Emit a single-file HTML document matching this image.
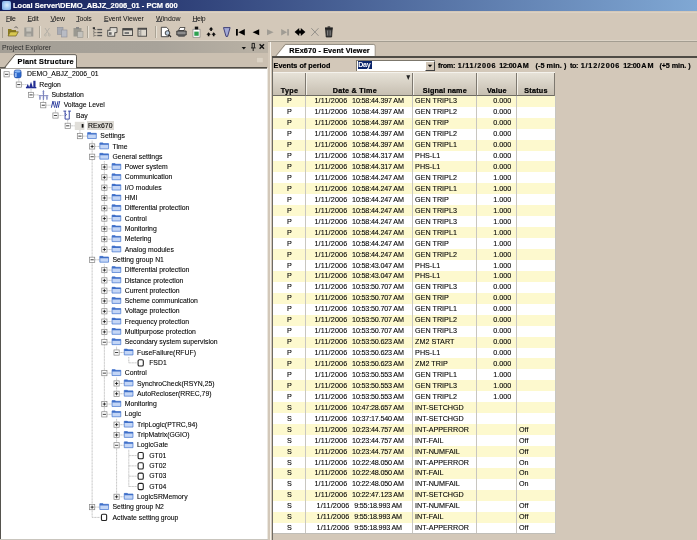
<!DOCTYPE html>
<html><head><meta charset="utf-8"><title>PCM 600</title><style>
*{margin:0;padding:0;box-sizing:border-box}
html,body{width:697px;height:540px;overflow:hidden;background:#d3c8b9}
body{position:relative;font-family:"Liberation Sans",sans-serif;color:#000}
.a{position:absolute;white-space:pre}
.t{position:absolute;white-space:pre;font-size:6.85px;line-height:10px;height:10px;color:#000;-webkit-text-stroke:.08px #000}
.c{position:absolute;white-space:pre;font-size:7.2px;line-height:11px;height:11px;color:#000;-webkit-text-stroke:.1px #000}
.b{font-weight:bold;-webkit-text-stroke:.18px currentColor}
svg{position:absolute;overflow:visible}
.u{text-decoration:underline;text-decoration-thickness:.6px;text-underline-offset:.2px;text-decoration-color:#555}
#r{position:absolute;left:0;top:0;width:697px;height:540px;will-change:transform;transform:translateZ(0);filter:blur(.5px)}
</style></head><body><div id="r">
<div class="a" style="left:-8px;top:-8px;width:713px;height:19.3px;background:linear-gradient(90deg,#121c58 0%,#121c58 8px,#80a8d4 705px,#80a8d4 100%)"></div>
<div class="a" style="left:1.8px;top:.7px;width:9.4px;height:9.3px;background:radial-gradient(circle at 55% 45%,#dcecfc 0%,#a8ccf4 45%,#6c9ee0 100%);border-radius:1.6px"></div>
<div class="a b" style="left:13px;top:0px;font-size:7.5px;line-height:11px;color:#fff">Local Server\DEMO_ABJZ_2006_01 - PCM 600</div>
<div class="a" style="left:-8px;top:12px;width:713px;height:1px;background:#dbd1c3"></div>
<div class="a" style="left:6px;top:13px;font-size:6.9px;letter-spacing:-0.405px;line-height:11px;color:#111"><span class="u">F</span>ile</div>
<div class="a" style="left:27.4px;top:13px;font-size:6.9px;letter-spacing:-0.223px;line-height:11px;color:#111"><span class="u">E</span>dit</div>
<div class="a" style="left:50.4px;top:13px;font-size:6.9px;letter-spacing:-0.108px;line-height:11px;color:#111"><span class="u">V</span>iew</div>
<div class="a" style="left:76.2px;top:13px;font-size:6.9px;letter-spacing:-0.122px;line-height:11px;color:#111"><span class="u">T</span>ools</div>
<div class="a" style="left:103.9px;top:13px;font-size:6.9px;letter-spacing:-0.061px;line-height:11px;color:#111"><span class="u">E</span>vent Viewer</div>
<div class="a" style="left:156px;top:13px;font-size:6.9px;letter-spacing:0.010px;line-height:11px;color:#111"><span class="u">W</span>indow</div>
<div class="a" style="left:192.4px;top:13px;font-size:6.9px;letter-spacing:-0.298px;line-height:11px;color:#111"><span class="u">H</span>elp</div>
<div class="a" style="left:1.6px;top:26.7px;width:1px;height:11.2px;background:#a89f90"></div>
<div class="a" style="left:39px;top:26px;width:1px;height:12px;background:#aaa395"></div>
<div class="a" style="left:40px;top:26px;width:1px;height:12px;background:#e6e0d4"></div>
<div class="a" style="left:87.3px;top:26px;width:1px;height:12px;background:#aaa395"></div>
<div class="a" style="left:88.3px;top:26px;width:1px;height:12px;background:#e6e0d4"></div>
<div class="a" style="left:155px;top:26px;width:1px;height:12px;background:#aaa395"></div>
<div class="a" style="left:156px;top:26px;width:1px;height:12px;background:#e6e0d4"></div>
<svg style="left:0;top:24px" width="340" height="17" viewBox="0 0 340 17">
<path d="M8 5h3l1 1h4v2h-6l-2 4z" fill="#8a7a20"/><path d="M8 12l2.3-4.2h8l-2.3 4.2z" fill="#d8c850" stroke="#5a4c10" stroke-width=".6"/><path d="M14.5 3.5c1.5-1 2.8-.5 3.2.8" stroke="#333" stroke-width=".7" fill="none"/>
<rect x="24.3" y="3.5" width="9" height="9" fill="#9c9a94"/><rect x="26.3" y="3.5" width="5" height="4" fill="#c8c5bd"/><rect x="26.5" y="9.5" width="4.6" height="3" fill="#b8b5ad"/>
<path d="M45 4l4 6M49.5 4l-4 6" stroke="#b0ada5" stroke-width=".9"/><circle cx="45.3" cy="11" r="1" fill="none" stroke="#b0ada5" stroke-width=".7"/><circle cx="49.3" cy="11" r="1" fill="none" stroke="#b0ada5" stroke-width=".7"/>
<rect x="57.5" y="3.3" width="5.5" height="7" fill="#a8abb4" stroke="#8c8e98" stroke-width=".6"/><rect x="61.5" y="6" width="5.5" height="7" fill="#b8bbc4" stroke="#8c8e98" stroke-width=".6"/>
<rect x="73.5" y="4" width="8" height="8.5" fill="#9a9890"/><rect x="76" y="3" width="3" height="2" fill="#888"/><rect x="77.5" y="7.5" width="5.5" height="6" fill="#c4c2bc" stroke="#8c8a84" stroke-width=".5"/>
<path d="M93.8 4v8.4M93.8 5.6h3M93.8 8.6h3M93.8 11.6h3" stroke="#333" stroke-width=".7" stroke-dasharray=".9 .7" fill="none"/><rect x="92.8" y="3.2" width="2.2" height="1.8" fill="#333"/><rect x="97.3" y="4.9" width="4.8" height="1.3" fill="#555"/><rect x="97.3" y="7.9" width="4.8" height="1.3" fill="#555"/><rect x="97.3" y="10.9" width="4.8" height="1.3" fill="#555"/>
<rect x="107.8" y="6.2" width="7" height="6" fill="#e8e4dc" stroke="#333" stroke-width=".8"/><path d="M110 6.2v-2.6h7v5h-2" fill="#dedad2" stroke="#333" stroke-width=".8"/><path d="M109 8.2h2.6v2.6h-2.6z" fill="#666"/>
<rect x="122.8" y="4.6" width="9.6" height="7" fill="#dcd7cd" stroke="#333" stroke-width=".8"/><rect x="122.8" y="4.6" width="9.6" height="1.8" fill="#444"/><rect x="124.6" y="8" width="4.4" height="2" fill="#777"/>
<rect x="138" y="4.2" width="8.6" height="8" fill="#dcd7cd" stroke="#333" stroke-width=".8"/><rect x="138" y="4.2" width="8.6" height="1.5" fill="#444"/><path d="M140.8 5.6v6.4" stroke="#666" stroke-width=".6"/><path d="M138.8 7.4h1.4M138.8 9.2h1.4M138.8 11h1.4" stroke="#777" stroke-width=".5"/>
<path d="M161.3 3.3h5.2l2 2v7.4h-7.2z" fill="#fff" stroke="#222" stroke-width=".8"/><circle cx="167.5" cy="9" r="2.3" fill="#bcd" stroke="#222" stroke-width=".8"/><path d="M169 10.8l2 2.2" stroke="#222" stroke-width="1.2"/>
<path d="M178.5 6.5l1.5-3h5l-1 3z" fill="#fff" stroke="#222" stroke-width=".7"/><path d="M176.8 7h9.4v4h-9.4z" fill="#8c8c8c" stroke="#222" stroke-width=".8"/><path d="M177.5 11h8l-1 1.8h-6z" fill="#555"/>
<rect x="193" y="5.2" width="7" height="8" fill="#fff" stroke="#777" stroke-width=".6"/><rect x="194.8" y="2.6" width="3.4" height="2.8" fill="#111"/><rect x="194.3" y="7.6" width="4.4" height="4.2" fill="#2ca050"/>
<path d="M211.1 2.9l2.2 2.6h-1.4v1.5h-1.6v-1.5h-1.4zM208.6 8.2l2.2 2.6h-1.4v1.5h-1.6v-1.5h-1.4zM213.7 8.2l2.2 2.6h-1.4v1.5h-1.6v-1.5h-1.4z" fill="#0a0a0a"/>
<path d="M223.5 3.6h6.6l-2.5 8.8h-1.6z" fill="#a2a8d6" stroke="#34346e" stroke-width=".9"/>
<rect x="236" y="5" width="1.8" height="6.6" fill="#000"/><path d="M244.8 5v6.6l-6.4-3.3z" fill="#000"/>
<path d="M259.2 5.3v6l-6.6-3z" fill="#000"/>
<path d="M267 5.3v6l6.6-3z" fill="#a09c94"/>
<path d="M281.2 5.1v6.4l5.8-3.2z" fill="#a09c94"/><rect x="287.2" y="5.1" width="1.7" height="6.4" fill="#a09c94"/>
<path d="M294.6 8l4.6-4v2.6h1.6v-2.6l4.6 4-4.6 4v-2.6h-1.6v2.6z" fill="#000"/>
<path d="M311.3 4.2l7.2 7.6M318.5 4.2l-7.2 7.6" stroke="#8c8a84" stroke-width=".9"/>
<path d="M325.6 5h6.6l-.6 8h-5.4z" fill="#444" stroke="#111" stroke-width=".7"/><rect x="325" y="3.4" width="7.8" height="1.8" fill="#222"/><rect x="327.6" y="2.4" width="2.6" height="1.2" fill="#222"/><path d="M327.6 6.5v5M330.2 6.5v5" stroke="#aaa" stroke-width=".6"/>
</svg>
<div class="a" style="left:-8px;top:39.7px;width:713px;height:1px;background:#dcd3c6"></div>
<div class="a" style="left:267px;top:40.7px;width:438px;height:1px;background:#a39d91"></div>
<div class="a" style="left:-8px;top:41px;width:275.5px;height:11.5px;background:linear-gradient(90deg,#a39e95 0%,#a8a39a 60%,#bab2a5 100%)"></div>
<div class="a" style="left:1.9px;top:42.1px;font-size:6.9px;line-height:11px;color:#2c2c2c;letter-spacing:0.013px">Project Explorer</div>
<svg style="left:240px;top:41px" width="28" height="12" viewBox="0 0 28 12"><path d="M1.6 6h4.4l-2.2 2.4z" fill="#111"/><path d="M12.1 2.2v4.6M14.4 2.2v4.6M11 6.9h4.6M13.2 7v3M12.1 2.4h2.3" stroke="#111" stroke-width=".9" fill="none"/><path d="M19.6 3.2l4.4 4.6M24 3.2l-4.4 4.6" stroke="#111" stroke-width="1.3"/></svg>
<div class="a" style="left:-8px;top:52.5px;width:275.5px;height:15px;background:#cbc0b1"></div>
<div class="a" style="left:0;top:67px;width:267px;height:1px;background:#4e4b45"></div>
<div class="a" style="left:0;top:68px;width:267px;height:1px;background:#8e8a82"></div>
<svg style="left:0;top:52px" width="268" height="16" viewBox="0 0 268 16"><path d="M0 15.5h4.5L15 2.7h60q1.5 0 1.5 1.5v11.3" fill="none" stroke="#5e5b54" stroke-width="1"/><path d="M5.2 16.2L15.3 3.2h59.5q1.2 0 1.2 1.2v11.8z" fill="#fff"/><rect x="256.6" y="5.4" width="6.6" height="5.4" fill="#dbd2c4" stroke="#c8beae" stroke-width=".7"/></svg>
<div class="a b" style="left:17.6px;top:55.6px;font-size:7.3px;line-height:11px;color:#000;letter-spacing:.26px">Plant Structure</div>
<div class="a" style="left:-8px;top:69px;width:274.5px;height:470.5px;background:#fff;border-left:9px solid #55534e"></div>
<div class="a" style="left:266.5px;top:68px;width:1px;height:472px;background:#ebe8e1"></div>
<div class="a" style="left:0;top:539.3px;width:268px;height:1px;background:#c9c5bd"></div>
<svg style="left:0;top:0" width="268" height="540" viewBox="0 0 268 540"><g stroke="#b0b0b0" stroke-width=".8" stroke-dasharray="1 .5" fill="none"><path d="M6.60 74.30h8" /><path d="M18.82 78.80V84.60" /><path d="M18.82 84.60h8" /><path d="M31.04 89.10V94.91" /><path d="M31.04 94.91h8" /><path d="M43.26 99.41V105.22" /><path d="M43.26 105.22h8" /><path d="M55.48 109.72V115.52" /><path d="M55.48 115.52h8" /><path d="M67.70 120.02V125.82" /><path d="M67.70 125.82h8" /><path d="M79.92 130.32V136.13" /><path d="M79.92 136.13h8" /><path d="M92.14 140.63V517.41" /><path d="M92.14 146.44h8" /><path d="M92.14 156.74h8" /><path d="M104.36 161.24V249.49" /><path d="M104.36 167.05h8" /><path d="M104.36 177.35h8" /><path d="M104.36 187.65h8" /><path d="M104.36 197.96h8" /><path d="M104.36 208.26h8" /><path d="M104.36 218.57h8" /><path d="M104.36 228.88h8" /><path d="M104.36 239.18h8" /><path d="M104.36 249.49h8" /><path d="M92.14 259.79h8" /><path d="M104.36 264.29V414.37" /><path d="M104.36 270.09h8" /><path d="M104.36 280.40h8" /><path d="M104.36 290.70h8" /><path d="M104.36 301.01h8" /><path d="M104.36 311.31h8" /><path d="M104.36 321.62h8" /><path d="M104.36 331.93h8" /><path d="M104.36 342.23h8" /><path d="M116.58 346.73V352.54" /><path d="M116.58 352.54h8" /><path d="M128.80 357.04V362.84" /><path d="M128.80 362.84h8" /><path d="M104.36 373.14h8" /><path d="M116.58 377.64V393.75" /><path d="M116.58 383.45h8" /><path d="M116.58 393.75h8" /><path d="M104.36 404.06h8" /><path d="M104.36 414.37h8" /><path d="M116.58 418.87V496.81" /><path d="M116.58 424.67h8" /><path d="M116.58 434.98h8" /><path d="M116.58 445.28h8" /><path d="M128.80 449.78V486.50" /><path d="M128.80 455.58h8" /><path d="M128.80 465.89h8" /><path d="M128.80 476.19h8" /><path d="M128.80 486.50h8" /><path d="M116.58 496.81h8" /><path d="M92.14 507.11h8" /><path d="M92.14 517.41h8" /></g>
<rect x="4.00" y="71.70" width="5.2" height="5.2" fill="#fff" stroke="#848484" stroke-width=".7"/>
<path d="M5.00 74.30h3.2" stroke="#000" stroke-width=".75"/>
<rect x="16.22" y="82.00" width="5.2" height="5.2" fill="#fff" stroke="#848484" stroke-width=".7"/>
<path d="M17.22 84.60h3.2" stroke="#000" stroke-width=".75"/>
<rect x="28.44" y="92.31" width="5.2" height="5.2" fill="#fff" stroke="#848484" stroke-width=".7"/>
<path d="M29.44 94.91h3.2" stroke="#000" stroke-width=".75"/>
<rect x="40.66" y="102.62" width="5.2" height="5.2" fill="#fff" stroke="#848484" stroke-width=".7"/>
<path d="M41.66 105.22h3.2" stroke="#000" stroke-width=".75"/>
<rect x="52.88" y="112.92" width="5.2" height="5.2" fill="#fff" stroke="#848484" stroke-width=".7"/>
<path d="M53.88 115.52h3.2" stroke="#000" stroke-width=".75"/>
<rect x="65.10" y="123.22" width="5.2" height="5.2" fill="#fff" stroke="#848484" stroke-width=".7"/>
<path d="M66.10 125.82h3.2" stroke="#000" stroke-width=".75"/>
<rect x="77.32" y="133.53" width="5.2" height="5.2" fill="#fff" stroke="#848484" stroke-width=".7"/>
<path d="M78.32 136.13h3.2" stroke="#000" stroke-width=".75"/>
<rect x="89.54" y="143.84" width="5.2" height="5.2" fill="#fff" stroke="#848484" stroke-width=".7"/>
<path d="M90.54 146.44h3.2" stroke="#000" stroke-width=".75"/>
<path d="M92.14 144.84v3.2" stroke="#000" stroke-width=".75"/>
<rect x="89.54" y="154.14" width="5.2" height="5.2" fill="#fff" stroke="#848484" stroke-width=".7"/>
<path d="M90.54 156.74h3.2" stroke="#000" stroke-width=".75"/>
<rect x="101.76" y="164.45" width="5.2" height="5.2" fill="#fff" stroke="#848484" stroke-width=".7"/>
<path d="M102.76 167.05h3.2" stroke="#000" stroke-width=".75"/>
<path d="M104.36 165.45v3.2" stroke="#000" stroke-width=".75"/>
<rect x="101.76" y="174.75" width="5.2" height="5.2" fill="#fff" stroke="#848484" stroke-width=".7"/>
<path d="M102.76 177.35h3.2" stroke="#000" stroke-width=".75"/>
<path d="M104.36 175.75v3.2" stroke="#000" stroke-width=".75"/>
<rect x="101.76" y="185.05" width="5.2" height="5.2" fill="#fff" stroke="#848484" stroke-width=".7"/>
<path d="M102.76 187.65h3.2" stroke="#000" stroke-width=".75"/>
<path d="M104.36 186.05v3.2" stroke="#000" stroke-width=".75"/>
<rect x="101.76" y="195.36" width="5.2" height="5.2" fill="#fff" stroke="#848484" stroke-width=".7"/>
<path d="M102.76 197.96h3.2" stroke="#000" stroke-width=".75"/>
<path d="M104.36 196.36v3.2" stroke="#000" stroke-width=".75"/>
<rect x="101.76" y="205.66" width="5.2" height="5.2" fill="#fff" stroke="#848484" stroke-width=".7"/>
<path d="M102.76 208.26h3.2" stroke="#000" stroke-width=".75"/>
<path d="M104.36 206.66v3.2" stroke="#000" stroke-width=".75"/>
<rect x="101.76" y="215.97" width="5.2" height="5.2" fill="#fff" stroke="#848484" stroke-width=".7"/>
<path d="M102.76 218.57h3.2" stroke="#000" stroke-width=".75"/>
<path d="M104.36 216.97v3.2" stroke="#000" stroke-width=".75"/>
<rect x="101.76" y="226.28" width="5.2" height="5.2" fill="#fff" stroke="#848484" stroke-width=".7"/>
<path d="M102.76 228.88h3.2" stroke="#000" stroke-width=".75"/>
<path d="M104.36 227.28v3.2" stroke="#000" stroke-width=".75"/>
<rect x="101.76" y="236.58" width="5.2" height="5.2" fill="#fff" stroke="#848484" stroke-width=".7"/>
<path d="M102.76 239.18h3.2" stroke="#000" stroke-width=".75"/>
<path d="M104.36 237.58v3.2" stroke="#000" stroke-width=".75"/>
<rect x="101.76" y="246.89" width="5.2" height="5.2" fill="#fff" stroke="#848484" stroke-width=".7"/>
<path d="M102.76 249.49h3.2" stroke="#000" stroke-width=".75"/>
<path d="M104.36 247.89v3.2" stroke="#000" stroke-width=".75"/>
<rect x="89.54" y="257.19" width="5.2" height="5.2" fill="#fff" stroke="#848484" stroke-width=".7"/>
<path d="M90.54 259.79h3.2" stroke="#000" stroke-width=".75"/>
<rect x="101.76" y="267.49" width="5.2" height="5.2" fill="#fff" stroke="#848484" stroke-width=".7"/>
<path d="M102.76 270.09h3.2" stroke="#000" stroke-width=".75"/>
<path d="M104.36 268.49v3.2" stroke="#000" stroke-width=".75"/>
<rect x="101.76" y="277.80" width="5.2" height="5.2" fill="#fff" stroke="#848484" stroke-width=".7"/>
<path d="M102.76 280.40h3.2" stroke="#000" stroke-width=".75"/>
<path d="M104.36 278.80v3.2" stroke="#000" stroke-width=".75"/>
<rect x="101.76" y="288.10" width="5.2" height="5.2" fill="#fff" stroke="#848484" stroke-width=".7"/>
<path d="M102.76 290.70h3.2" stroke="#000" stroke-width=".75"/>
<path d="M104.36 289.10v3.2" stroke="#000" stroke-width=".75"/>
<rect x="101.76" y="298.41" width="5.2" height="5.2" fill="#fff" stroke="#848484" stroke-width=".7"/>
<path d="M102.76 301.01h3.2" stroke="#000" stroke-width=".75"/>
<path d="M104.36 299.41v3.2" stroke="#000" stroke-width=".75"/>
<rect x="101.76" y="308.71" width="5.2" height="5.2" fill="#fff" stroke="#848484" stroke-width=".7"/>
<path d="M102.76 311.31h3.2" stroke="#000" stroke-width=".75"/>
<path d="M104.36 309.71v3.2" stroke="#000" stroke-width=".75"/>
<rect x="101.76" y="319.02" width="5.2" height="5.2" fill="#fff" stroke="#848484" stroke-width=".7"/>
<path d="M102.76 321.62h3.2" stroke="#000" stroke-width=".75"/>
<path d="M104.36 320.02v3.2" stroke="#000" stroke-width=".75"/>
<rect x="101.76" y="329.32" width="5.2" height="5.2" fill="#fff" stroke="#848484" stroke-width=".7"/>
<path d="M102.76 331.93h3.2" stroke="#000" stroke-width=".75"/>
<path d="M104.36 330.32v3.2" stroke="#000" stroke-width=".75"/>
<rect x="101.76" y="339.63" width="5.2" height="5.2" fill="#fff" stroke="#848484" stroke-width=".7"/>
<path d="M102.76 342.23h3.2" stroke="#000" stroke-width=".75"/>
<rect x="113.98" y="349.94" width="5.2" height="5.2" fill="#fff" stroke="#848484" stroke-width=".7"/>
<path d="M114.98 352.54h3.2" stroke="#000" stroke-width=".75"/>
<rect x="101.76" y="370.54" width="5.2" height="5.2" fill="#fff" stroke="#848484" stroke-width=".7"/>
<path d="M102.76 373.14h3.2" stroke="#000" stroke-width=".75"/>
<rect x="113.98" y="380.85" width="5.2" height="5.2" fill="#fff" stroke="#848484" stroke-width=".7"/>
<path d="M114.98 383.45h3.2" stroke="#000" stroke-width=".75"/>
<path d="M116.58 381.85v3.2" stroke="#000" stroke-width=".75"/>
<rect x="113.98" y="391.15" width="5.2" height="5.2" fill="#fff" stroke="#848484" stroke-width=".7"/>
<path d="M114.98 393.75h3.2" stroke="#000" stroke-width=".75"/>
<path d="M116.58 392.15v3.2" stroke="#000" stroke-width=".75"/>
<rect x="101.76" y="401.46" width="5.2" height="5.2" fill="#fff" stroke="#848484" stroke-width=".7"/>
<path d="M102.76 404.06h3.2" stroke="#000" stroke-width=".75"/>
<path d="M104.36 402.46v3.2" stroke="#000" stroke-width=".75"/>
<rect x="101.76" y="411.76" width="5.2" height="5.2" fill="#fff" stroke="#848484" stroke-width=".7"/>
<path d="M102.76 414.37h3.2" stroke="#000" stroke-width=".75"/>
<rect x="113.98" y="422.07" width="5.2" height="5.2" fill="#fff" stroke="#848484" stroke-width=".7"/>
<path d="M114.98 424.67h3.2" stroke="#000" stroke-width=".75"/>
<path d="M116.58 423.07v3.2" stroke="#000" stroke-width=".75"/>
<rect x="113.98" y="432.38" width="5.2" height="5.2" fill="#fff" stroke="#848484" stroke-width=".7"/>
<path d="M114.98 434.98h3.2" stroke="#000" stroke-width=".75"/>
<path d="M116.58 433.38v3.2" stroke="#000" stroke-width=".75"/>
<rect x="113.98" y="442.68" width="5.2" height="5.2" fill="#fff" stroke="#848484" stroke-width=".7"/>
<path d="M114.98 445.28h3.2" stroke="#000" stroke-width=".75"/>
<rect x="113.98" y="494.20" width="5.2" height="5.2" fill="#fff" stroke="#848484" stroke-width=".7"/>
<path d="M114.98 496.81h3.2" stroke="#000" stroke-width=".75"/>
<path d="M116.58 495.20v3.2" stroke="#000" stroke-width=".75"/>
<rect x="89.54" y="504.51" width="5.2" height="5.2" fill="#fff" stroke="#848484" stroke-width=".7"/>
<path d="M90.54 507.11h3.2" stroke="#000" stroke-width=".75"/>
<path d="M92.14 505.51v3.2" stroke="#000" stroke-width=".75"/>
<g transform="translate(14.20 69.70)"><rect x="0" y=".2" width="7" height="8" rx="2" fill="#2c69cc"/><ellipse cx="3.5" cy="1.5" rx="3.2" ry="1.3" fill="#8ab8f4"/><path d="M1.7 3.2v4" stroke="#c4dcff" stroke-width="1.2"/><rect x="0" y=".2" width="7" height="8" rx="2" fill="none" stroke="#1c3f90" stroke-width=".5"/></g>
<g transform="translate(25.92 79.70)" fill="#222e94"><path d="M0 8.6h10.4v-1.3h-10.4z"/><path d="M.4 7.6l1.5-3.6 1.4 3.6zM3.2 7.6l1.9-5.6 1.8 5.6zM7.4 7.6v-6.6h2.2v6.6z"/></g>
<g transform="translate(38.14 89.91)" stroke="#5560a8" stroke-width=".8" fill="none"><path d="M5.3 .4v5M.6 5.8h9.6M1.8 5.8v4.2M5.3 5.8v4.2M8.8 5.8v4.2" /><path d="M4.5 1.6h1.6M4.5 3.2h1.6M1 8h1.6M4.5 8h1.6M8 8h1.6" stroke="#7a86c4" stroke-width="1"/></g>
<g transform="translate(50.96 100.31)" stroke="#2f3f9e" stroke-width="1" fill="none"><path d="M.4 7.4l1.6-6.6 1.7 6.6M3.9 .8l1.6 6.6 1.6-6.6M7.3 7.4l1.4-6.6"/></g>
<g transform="translate(63.38 110.32)" stroke="#2a3a9c" stroke-width=".9" fill="none"><path d="M0 .8h2.8M4.8 .8h2.8M1.7 .8v8M5.9 .8v8M1.7 8.8h4.2M1.9 3q2.2 1.2 0 2.6"/></g>
<rect x="74.80" y="121.82" width="9.6" height="8.2" fill="#e0ded9"/><rect x="81.70" y="124.02" width="1.8" height="3.6" fill="#111"/>
<g transform="translate(87.32 131.83)"><path d="M.3 .9h3l.6.6h5.1v5.2h-8.7z" fill="#c4d6f6" stroke="#4173cf" stroke-width=".7"/><path d="M.3 .7h3.2l.5.7h5v1.3h-8.7z" fill="#3f6fc8"/></g>
<g transform="translate(99.54 142.13)"><path d="M.3 .9h3l.6.6h5.1v5.2h-8.7z" fill="#c4d6f6" stroke="#4173cf" stroke-width=".7"/><path d="M.3 .7h3.2l.5.7h5v1.3h-8.7z" fill="#3f6fc8"/></g>
<g transform="translate(99.54 152.44)"><path d="M.3 .9h3l.6.6h5.1v5.2h-8.7z" fill="#c4d6f6" stroke="#4173cf" stroke-width=".7"/><path d="M.3 .7h3.2l.5.7h5v1.3h-8.7z" fill="#3f6fc8"/></g>
<g transform="translate(111.76 162.75)"><path d="M.3 .9h3l.6.6h5.1v5.2h-8.7z" fill="#c4d6f6" stroke="#4173cf" stroke-width=".7"/><path d="M.3 .7h3.2l.5.7h5v1.3h-8.7z" fill="#3f6fc8"/></g>
<g transform="translate(111.76 173.05)"><path d="M.3 .9h3l.6.6h5.1v5.2h-8.7z" fill="#c4d6f6" stroke="#4173cf" stroke-width=".7"/><path d="M.3 .7h3.2l.5.7h5v1.3h-8.7z" fill="#3f6fc8"/></g>
<g transform="translate(111.76 183.35)"><path d="M.3 .9h3l.6.6h5.1v5.2h-8.7z" fill="#c4d6f6" stroke="#4173cf" stroke-width=".7"/><path d="M.3 .7h3.2l.5.7h5v1.3h-8.7z" fill="#3f6fc8"/></g>
<g transform="translate(111.76 193.66)"><path d="M.3 .9h3l.6.6h5.1v5.2h-8.7z" fill="#c4d6f6" stroke="#4173cf" stroke-width=".7"/><path d="M.3 .7h3.2l.5.7h5v1.3h-8.7z" fill="#3f6fc8"/></g>
<g transform="translate(111.76 203.96)"><path d="M.3 .9h3l.6.6h5.1v5.2h-8.7z" fill="#c4d6f6" stroke="#4173cf" stroke-width=".7"/><path d="M.3 .7h3.2l.5.7h5v1.3h-8.7z" fill="#3f6fc8"/></g>
<g transform="translate(111.76 214.27)"><path d="M.3 .9h3l.6.6h5.1v5.2h-8.7z" fill="#c4d6f6" stroke="#4173cf" stroke-width=".7"/><path d="M.3 .7h3.2l.5.7h5v1.3h-8.7z" fill="#3f6fc8"/></g>
<g transform="translate(111.76 224.57)"><path d="M.3 .9h3l.6.6h5.1v5.2h-8.7z" fill="#c4d6f6" stroke="#4173cf" stroke-width=".7"/><path d="M.3 .7h3.2l.5.7h5v1.3h-8.7z" fill="#3f6fc8"/></g>
<g transform="translate(111.76 234.88)"><path d="M.3 .9h3l.6.6h5.1v5.2h-8.7z" fill="#c4d6f6" stroke="#4173cf" stroke-width=".7"/><path d="M.3 .7h3.2l.5.7h5v1.3h-8.7z" fill="#3f6fc8"/></g>
<g transform="translate(111.76 245.19)"><path d="M.3 .9h3l.6.6h5.1v5.2h-8.7z" fill="#c4d6f6" stroke="#4173cf" stroke-width=".7"/><path d="M.3 .7h3.2l.5.7h5v1.3h-8.7z" fill="#3f6fc8"/></g>
<g transform="translate(99.54 255.49)"><path d="M.3 .9h3l.6.6h5.1v5.2h-8.7z" fill="#c4d6f6" stroke="#4173cf" stroke-width=".7"/><path d="M.3 .7h3.2l.5.7h5v1.3h-8.7z" fill="#3f6fc8"/></g>
<g transform="translate(111.76 265.79)"><path d="M.3 .9h3l.6.6h5.1v5.2h-8.7z" fill="#c4d6f6" stroke="#4173cf" stroke-width=".7"/><path d="M.3 .7h3.2l.5.7h5v1.3h-8.7z" fill="#3f6fc8"/></g>
<g transform="translate(111.76 276.10)"><path d="M.3 .9h3l.6.6h5.1v5.2h-8.7z" fill="#c4d6f6" stroke="#4173cf" stroke-width=".7"/><path d="M.3 .7h3.2l.5.7h5v1.3h-8.7z" fill="#3f6fc8"/></g>
<g transform="translate(111.76 286.40)"><path d="M.3 .9h3l.6.6h5.1v5.2h-8.7z" fill="#c4d6f6" stroke="#4173cf" stroke-width=".7"/><path d="M.3 .7h3.2l.5.7h5v1.3h-8.7z" fill="#3f6fc8"/></g>
<g transform="translate(111.76 296.71)"><path d="M.3 .9h3l.6.6h5.1v5.2h-8.7z" fill="#c4d6f6" stroke="#4173cf" stroke-width=".7"/><path d="M.3 .7h3.2l.5.7h5v1.3h-8.7z" fill="#3f6fc8"/></g>
<g transform="translate(111.76 307.01)"><path d="M.3 .9h3l.6.6h5.1v5.2h-8.7z" fill="#c4d6f6" stroke="#4173cf" stroke-width=".7"/><path d="M.3 .7h3.2l.5.7h5v1.3h-8.7z" fill="#3f6fc8"/></g>
<g transform="translate(111.76 317.32)"><path d="M.3 .9h3l.6.6h5.1v5.2h-8.7z" fill="#c4d6f6" stroke="#4173cf" stroke-width=".7"/><path d="M.3 .7h3.2l.5.7h5v1.3h-8.7z" fill="#3f6fc8"/></g>
<g transform="translate(111.76 327.62)"><path d="M.3 .9h3l.6.6h5.1v5.2h-8.7z" fill="#c4d6f6" stroke="#4173cf" stroke-width=".7"/><path d="M.3 .7h3.2l.5.7h5v1.3h-8.7z" fill="#3f6fc8"/></g>
<g transform="translate(111.76 337.93)"><path d="M.3 .9h3l.6.6h5.1v5.2h-8.7z" fill="#c4d6f6" stroke="#4173cf" stroke-width=".7"/><path d="M.3 .7h3.2l.5.7h5v1.3h-8.7z" fill="#3f6fc8"/></g>
<g transform="translate(123.98 348.24)"><path d="M.3 .9h3l.6.6h5.1v5.2h-8.7z" fill="#c4d6f6" stroke="#4173cf" stroke-width=".7"/><path d="M.3 .7h3.2l.5.7h5v1.3h-8.7z" fill="#3f6fc8"/></g>
<rect x="138.10" y="359.74" width="5.2" height="6.2" rx="1.3" fill="#fff" stroke="#222" stroke-width="1.1"/>
<g transform="translate(111.76 368.84)"><path d="M.3 .9h3l.6.6h5.1v5.2h-8.7z" fill="#c4d6f6" stroke="#4173cf" stroke-width=".7"/><path d="M.3 .7h3.2l.5.7h5v1.3h-8.7z" fill="#3f6fc8"/></g>
<g transform="translate(123.98 379.15)"><path d="M.3 .9h3l.6.6h5.1v5.2h-8.7z" fill="#c4d6f6" stroke="#4173cf" stroke-width=".7"/><path d="M.3 .7h3.2l.5.7h5v1.3h-8.7z" fill="#3f6fc8"/></g>
<g transform="translate(123.98 389.45)"><path d="M.3 .9h3l.6.6h5.1v5.2h-8.7z" fill="#c4d6f6" stroke="#4173cf" stroke-width=".7"/><path d="M.3 .7h3.2l.5.7h5v1.3h-8.7z" fill="#3f6fc8"/></g>
<g transform="translate(111.76 399.76)"><path d="M.3 .9h3l.6.6h5.1v5.2h-8.7z" fill="#c4d6f6" stroke="#4173cf" stroke-width=".7"/><path d="M.3 .7h3.2l.5.7h5v1.3h-8.7z" fill="#3f6fc8"/></g>
<g transform="translate(111.76 410.06)"><path d="M.3 .9h3l.6.6h5.1v5.2h-8.7z" fill="#c4d6f6" stroke="#4173cf" stroke-width=".7"/><path d="M.3 .7h3.2l.5.7h5v1.3h-8.7z" fill="#3f6fc8"/></g>
<g transform="translate(123.98 420.37)"><path d="M.3 .9h3l.6.6h5.1v5.2h-8.7z" fill="#c4d6f6" stroke="#4173cf" stroke-width=".7"/><path d="M.3 .7h3.2l.5.7h5v1.3h-8.7z" fill="#3f6fc8"/></g>
<g transform="translate(123.98 430.68)"><path d="M.3 .9h3l.6.6h5.1v5.2h-8.7z" fill="#c4d6f6" stroke="#4173cf" stroke-width=".7"/><path d="M.3 .7h3.2l.5.7h5v1.3h-8.7z" fill="#3f6fc8"/></g>
<g transform="translate(123.98 440.98)"><path d="M.3 .9h3l.6.6h5.1v5.2h-8.7z" fill="#c4d6f6" stroke="#4173cf" stroke-width=".7"/><path d="M.3 .7h3.2l.5.7h5v1.3h-8.7z" fill="#3f6fc8"/></g>
<rect x="138.10" y="452.48" width="5.2" height="6.2" rx="1.3" fill="#fff" stroke="#222" stroke-width="1.1"/>
<rect x="138.10" y="462.79" width="5.2" height="6.2" rx="1.3" fill="#fff" stroke="#222" stroke-width="1.1"/>
<rect x="138.10" y="473.09" width="5.2" height="6.2" rx="1.3" fill="#fff" stroke="#222" stroke-width="1.1"/>
<rect x="138.10" y="483.40" width="5.2" height="6.2" rx="1.3" fill="#fff" stroke="#222" stroke-width="1.1"/>
<g transform="translate(123.98 492.50)"><path d="M.3 .9h3l.6.6h5.1v5.2h-8.7z" fill="#c4d6f6" stroke="#4173cf" stroke-width=".7"/><path d="M.3 .7h3.2l.5.7h5v1.3h-8.7z" fill="#3f6fc8"/></g>
<g transform="translate(99.54 502.81)"><path d="M.3 .9h3l.6.6h5.1v5.2h-8.7z" fill="#c4d6f6" stroke="#4173cf" stroke-width=".7"/><path d="M.3 .7h3.2l.5.7h5v1.3h-8.7z" fill="#3f6fc8"/></g>
<rect x="101.44" y="514.31" width="5.2" height="6.2" rx="1.3" fill="#fff" stroke="#222" stroke-width="1.1"/>
</svg>
<div class="a" style="left:87.2px;top:121.42px;width:26.4px;height:8.6px;background:#dcd9d3"></div>
<div class="t" style="left:27.00px;top:69.40px">DEMO_ABJZ_2006_01</div>
<div class="t" style="left:39.22px;top:79.70px">Region</div>
<div class="t" style="left:51.44px;top:90.01px">Substation</div>
<div class="t" style="left:63.66px;top:100.31px">Voltage Level</div>
<div class="t" style="left:75.88px;top:110.62px">Bay</div>
<div class="t" style="left:88.10px;top:120.92px">REx670</div>
<div class="t" style="left:100.32px;top:131.23px">Settings</div>
<div class="t" style="left:112.54px;top:141.53px">Time</div>
<div class="t" style="left:112.54px;top:151.84px">General settings</div>
<div class="t" style="left:124.76px;top:162.15px">Power system</div>
<div class="t" style="left:124.76px;top:172.45px">Communication</div>
<div class="t" style="left:124.76px;top:182.75px">I/O modules</div>
<div class="t" style="left:124.76px;top:193.06px">HMI</div>
<div class="t" style="left:124.76px;top:203.36px">Differential protection</div>
<div class="t" style="left:124.76px;top:213.67px">Control</div>
<div class="t" style="left:124.76px;top:223.97px">Monitoring</div>
<div class="t" style="left:124.76px;top:234.28px">Metering</div>
<div class="t" style="left:124.76px;top:244.59px">Analog modules</div>
<div class="t" style="left:112.54px;top:254.89px">Setting group N1</div>
<div class="t" style="left:124.76px;top:265.19px">Differential protection</div>
<div class="t" style="left:124.76px;top:275.50px">Distance protection</div>
<div class="t" style="left:124.76px;top:285.81px">Current protection</div>
<div class="t" style="left:124.76px;top:296.11px">Scheme communication</div>
<div class="t" style="left:124.76px;top:306.42px">Voltage protection</div>
<div class="t" style="left:124.76px;top:316.72px">Frequency protection</div>
<div class="t" style="left:124.76px;top:327.03px">Multipurpose protection</div>
<div class="t" style="left:124.76px;top:337.33px">Secondary system supervision</div>
<div class="t" style="left:136.98px;top:347.64px">FuseFailure(RFUF)</div>
<div class="t" style="left:149.20px;top:357.94px">FSD1</div>
<div class="t" style="left:124.76px;top:368.25px">Control</div>
<div class="t" style="left:136.98px;top:378.55px">SynchroCheck(RSYN,25)</div>
<div class="t" style="left:136.98px;top:388.86px">AutoRecloser(RREC,79)</div>
<div class="t" style="left:124.76px;top:399.16px">Monitoring</div>
<div class="t" style="left:124.76px;top:409.47px">Logic</div>
<div class="t" style="left:136.98px;top:419.77px">TripLogic(PTRC,94)</div>
<div class="t" style="left:136.98px;top:430.08px">TripMatrix(GGIO)</div>
<div class="t" style="left:136.98px;top:440.38px">LogicGate</div>
<div class="t" style="left:149.20px;top:450.69px">GT01</div>
<div class="t" style="left:149.20px;top:460.99px">GT02</div>
<div class="t" style="left:149.20px;top:471.30px">GT03</div>
<div class="t" style="left:149.20px;top:481.60px">GT04</div>
<div class="t" style="left:136.98px;top:491.91px">LogicSRMemory</div>
<div class="t" style="left:112.54px;top:502.21px">Setting group N2</div>
<div class="t" style="left:112.54px;top:512.51px">Activate setting group</div>
<div class="a" style="left:271px;top:42px;width:434px;height:14.5px;background:#cdc2b3"></div>
<svg style="left:268px;top:41px" width="429" height="18" viewBox="0 0 429 18"><path d="M4 15.8h3.2L17.2 3.4h88.3q1.5 0 1.5 1.5v11" fill="none" stroke="#8a857a" stroke-width=".9"/><path d="M7.6 16.3L17.6 3.9h87.9q1.1 0 1.1 1.1v11.3z" fill="#fff"/></svg>
<div class="a" style="left:271.7px;top:57px;width:1.2px;height:483px;background:#6e6b64"></div>
<div class="a" style="left:270.2px;top:42px;width:1px;height:498px;background:#f6f4ee"></div>
<div class="a" style="left:271.5px;top:56.3px;width:434px;height:1.7px;background:#4e4b45"></div>
<div class="a b" style="left:289.3px;top:45.2px;font-size:7.3px;line-height:11px;color:#000;letter-spacing:0.110px">REx670 - Event Viewer</div>
<div class="a b" style="left:273.6px;top:60.2px;font-size:7.25px;line-height:11px;color:#000">Events of period</div>
<div class="a" style="left:356.3px;top:59.8px;width:79px;height:11.2px;background:#fff;border-top:1px solid #7c776c;border-left:1px solid #7c776c"></div>
<div class="a" style="left:357.7px;top:61px;width:14.6px;height:8px;background:#0a246a"></div>
<div class="a" style="left:358.2px;top:60px;font-size:7.1px;line-height:11px;color:#fff;font-weight:bold;letter-spacing:-.2px">Day</div>
<div class="a" style="left:424.8px;top:61px;width:10px;height:9.6px;background:#d3c8b9;border:1px solid;border-color:#fff #404040 #404040 #fff"></div>
<svg style="left:424.8px;top:61px" width="10" height="10" viewBox="0 0 10 10"><path d="M2.8 3.8h4.4l-2.2 2.4z" fill="#000"/></svg>
<div class="a b" style="left:438px;top:60.2px;font-size:7.25px;line-height:11px;color:#000;letter-spacing:-0.285px">from:</div>
<div class="a b" style="left:457.7px;top:60.2px;font-size:7.25px;line-height:11px;color:#000;letter-spacing:0.750px">1/11/2006</div>
<div class="a b" style="left:499.3px;top:60.2px;font-size:7.25px;line-height:11px;color:#000;letter-spacing:-0.309px">12:00</div>
<div class="a b" style="left:516.9px;top:60.2px;font-size:7.25px;line-height:11px;color:#000;letter-spacing:0.612px">AM</div>
<div class="a b" style="left:535.4px;top:60.2px;font-size:7.25px;line-height:11px;color:#000;letter-spacing:0.089px">(-5 min. )</div>
<div class="a b" style="left:570px;top:60.2px;font-size:7.25px;line-height:11px;color:#000;letter-spacing:-0.386px">to:</div>
<div class="a b" style="left:580.7px;top:60.2px;font-size:7.25px;line-height:11px;color:#000;letter-spacing:0.805px">1/12/2006</div>
<div class="a b" style="left:623.3px;top:60.2px;font-size:7.25px;line-height:11px;color:#000;letter-spacing:-0.309px">12:00</div>
<div class="a b" style="left:641.2px;top:60.2px;font-size:7.25px;line-height:11px;color:#000;letter-spacing:0.962px">AM</div>
<div class="a b" style="left:659.4px;top:60.2px;font-size:7.25px;line-height:11px;color:#000;letter-spacing:-0.093px">(+5 min. )</div>
<div class="a" style="left:273px;top:72px;width:282.20000000000005px;height:23.799999999999997px;background:linear-gradient(180deg,#e6e1d7 0%,#d8d2c6 45%,#c6bfb1 100%);border-top:1px solid #f4f2ec;border-bottom:1px solid #6e6b64"></div>
<div class="a b" style="left:273.15px;width:32.89999999999998px;top:84.8px;text-align:center;font-size:7.2px;letter-spacing:0.307px;line-height:11px;-webkit-text-stroke:.22px #000">Type</div>
<div class="a" style="left:304.9px;top:73px;width:1px;height:22.799999999999997px;background:#7d786f"></div>
<div class="a" style="left:305.9px;top:73px;width:1px;height:21.799999999999997px;background:#f3f0e8"></div>
<div class="a b" style="left:301.53px;width:106.70000000000005px;top:84.8px;text-align:center;font-size:7.2px;letter-spacing:0.256px;line-height:11px;-webkit-text-stroke:.22px #000">Date &amp; Time</div>
<div class="a" style="left:411.6px;top:73px;width:1px;height:22.799999999999997px;background:#7d786f"></div>
<div class="a" style="left:412.6px;top:73px;width:1px;height:21.799999999999997px;background:#f3f0e8"></div>
<div class="a b" style="left:412.68px;width:64.29999999999995px;top:84.8px;text-align:center;font-size:7.2px;letter-spacing:0.153px;line-height:11px;-webkit-text-stroke:.22px #000">Signal name</div>
<div class="a" style="left:475.9px;top:73px;width:1px;height:22.799999999999997px;background:#7d786f"></div>
<div class="a" style="left:476.9px;top:73px;width:1px;height:21.799999999999997px;background:#f3f0e8"></div>
<div class="a b" style="left:477.02px;width:39.700000000000045px;top:84.8px;text-align:center;font-size:7.2px;letter-spacing:0.237px;line-height:11px;-webkit-text-stroke:.22px #000">Value</div>
<div class="a" style="left:515.6px;top:73px;width:1px;height:22.799999999999997px;background:#7d786f"></div>
<div class="a" style="left:516.6px;top:73px;width:1px;height:21.799999999999997px;background:#f3f0e8"></div>
<div class="a b" style="left:516.72px;width:38.60000000000002px;top:84.8px;text-align:center;font-size:7.2px;letter-spacing:0.232px;line-height:11px;-webkit-text-stroke:.22px #000">Status</div>
<div class="a" style="left:554.2px;top:73px;width:1px;height:22.799999999999997px;background:#7d786f"></div>
<svg style="left:405px;top:73px" width="8" height="8" viewBox="0 0 8 8"><path d="M1.3 2.2h3.9l-1.95 4.7z" fill="#222"/></svg>
<div class="a" style="left:273px;top:95.8px;width:282.20000000000005px;height:437.76px;background:#fff"></div>
<div class="a" style="left:273px;top:95.80px;width:282.20000000000005px;height:10.94px;background:#fdf9ce"></div>
<div class="a" style="left:273px;top:117.69px;width:282.20000000000005px;height:10.94px;background:#fdf9ce"></div>
<div class="a" style="left:273px;top:139.58px;width:282.20000000000005px;height:10.94px;background:#fdf9ce"></div>
<div class="a" style="left:273px;top:161.46px;width:282.20000000000005px;height:10.94px;background:#fdf9ce"></div>
<div class="a" style="left:273px;top:183.35px;width:282.20000000000005px;height:10.94px;background:#fdf9ce"></div>
<div class="a" style="left:273px;top:205.24px;width:282.20000000000005px;height:10.94px;background:#fdf9ce"></div>
<div class="a" style="left:273px;top:227.13px;width:282.20000000000005px;height:10.94px;background:#fdf9ce"></div>
<div class="a" style="left:273px;top:249.02px;width:282.20000000000005px;height:10.94px;background:#fdf9ce"></div>
<div class="a" style="left:273px;top:270.90px;width:282.20000000000005px;height:10.94px;background:#fdf9ce"></div>
<div class="a" style="left:273px;top:292.79px;width:282.20000000000005px;height:10.94px;background:#fdf9ce"></div>
<div class="a" style="left:273px;top:314.68px;width:282.20000000000005px;height:10.94px;background:#fdf9ce"></div>
<div class="a" style="left:273px;top:336.57px;width:282.20000000000005px;height:10.94px;background:#fdf9ce"></div>
<div class="a" style="left:273px;top:358.46px;width:282.20000000000005px;height:10.94px;background:#fdf9ce"></div>
<div class="a" style="left:273px;top:380.34px;width:282.20000000000005px;height:10.94px;background:#fdf9ce"></div>
<div class="a" style="left:273px;top:402.23px;width:282.20000000000005px;height:10.94px;background:#fdf9ce"></div>
<div class="a" style="left:273px;top:424.12px;width:282.20000000000005px;height:10.94px;background:#fdf9ce"></div>
<div class="a" style="left:273px;top:446.01px;width:282.20000000000005px;height:10.94px;background:#fdf9ce"></div>
<div class="a" style="left:273px;top:467.90px;width:282.20000000000005px;height:10.94px;background:#fdf9ce"></div>
<div class="a" style="left:273px;top:489.78px;width:282.20000000000005px;height:10.94px;background:#fdf9ce"></div>
<div class="a" style="left:273px;top:511.67px;width:282.20000000000005px;height:10.94px;background:#fdf9ce"></div>
<div class="a" style="left:305.29999999999995px;top:95.8px;width:.8px;height:437.76px;background:#c8c6c0"></div>
<div class="a" style="left:412.0px;top:95.8px;width:.8px;height:437.76px;background:#c8c6c0"></div>
<div class="a" style="left:476.29999999999995px;top:95.8px;width:.8px;height:437.76px;background:#c8c6c0"></div>
<div class="a" style="left:516.0px;top:95.8px;width:.8px;height:437.76px;background:#c8c6c0"></div>
<div class="a" style="left:554.6px;top:95.8px;width:.8px;height:437.76px;background:#c8c6c0"></div>
<div class="a" style="left:273px;top:533.26px;width:282.20000000000005px;height:.8px;background:#c0beb8"></div>
<div class="c" style="left:273px;width:32.89999999999998px;top:95.35px;text-align:center">P</div>
<div class="c" style="left:314.4px;top:95.35px;letter-spacing:0.178px">1/11/2006</div>
<div class="c" style="left:352.1px;top:95.35px;letter-spacing:-0.183px">10:58:44.397 AM</div>
<div class="c" style="left:415.1px;top:95.35px">GEN TRIPL3</div>
<div class="c" style="left:476.9px;width:34.40000000000005px;top:95.35px;text-align:right">0.000</div>
<div class="c" style="left:273px;width:32.89999999999998px;top:106.29px;text-align:center">P</div>
<div class="c" style="left:314.4px;top:106.29px;letter-spacing:0.178px">1/11/2006</div>
<div class="c" style="left:352.1px;top:106.29px;letter-spacing:-0.183px">10:58:44.397 AM</div>
<div class="c" style="left:415.1px;top:106.29px">GEN TRIPL2</div>
<div class="c" style="left:476.9px;width:34.40000000000005px;top:106.29px;text-align:right">0.000</div>
<div class="c" style="left:273px;width:32.89999999999998px;top:117.24px;text-align:center">P</div>
<div class="c" style="left:314.4px;top:117.24px;letter-spacing:0.178px">1/11/2006</div>
<div class="c" style="left:352.1px;top:117.24px;letter-spacing:-0.183px">10:58:44.397 AM</div>
<div class="c" style="left:415.1px;top:117.24px">GEN TRIP</div>
<div class="c" style="left:476.9px;width:34.40000000000005px;top:117.24px;text-align:right">0.000</div>
<div class="c" style="left:273px;width:32.89999999999998px;top:128.18px;text-align:center">P</div>
<div class="c" style="left:314.4px;top:128.18px;letter-spacing:0.178px">1/11/2006</div>
<div class="c" style="left:352.1px;top:128.18px;letter-spacing:-0.183px">10:58:44.397 AM</div>
<div class="c" style="left:415.1px;top:128.18px">GEN TRIPL2</div>
<div class="c" style="left:476.9px;width:34.40000000000005px;top:128.18px;text-align:right">0.000</div>
<div class="c" style="left:273px;width:32.89999999999998px;top:139.13px;text-align:center">P</div>
<div class="c" style="left:314.4px;top:139.13px;letter-spacing:0.178px">1/11/2006</div>
<div class="c" style="left:352.1px;top:139.13px;letter-spacing:-0.183px">10:58:44.397 AM</div>
<div class="c" style="left:415.1px;top:139.13px">GEN TRIPL1</div>
<div class="c" style="left:476.9px;width:34.40000000000005px;top:139.13px;text-align:right">0.000</div>
<div class="c" style="left:273px;width:32.89999999999998px;top:150.07px;text-align:center">P</div>
<div class="c" style="left:314.4px;top:150.07px;letter-spacing:0.178px">1/11/2006</div>
<div class="c" style="left:352.1px;top:150.07px;letter-spacing:-0.183px">10:58:44.317 AM</div>
<div class="c" style="left:415.1px;top:150.07px">PHS-L1</div>
<div class="c" style="left:476.9px;width:34.40000000000005px;top:150.07px;text-align:right">0.000</div>
<div class="c" style="left:273px;width:32.89999999999998px;top:161.01px;text-align:center">P</div>
<div class="c" style="left:314.4px;top:161.01px;letter-spacing:0.178px">1/11/2006</div>
<div class="c" style="left:352.1px;top:161.01px;letter-spacing:-0.183px">10:58:44.317 AM</div>
<div class="c" style="left:415.1px;top:161.01px">PHS-L1</div>
<div class="c" style="left:476.9px;width:34.40000000000005px;top:161.01px;text-align:right">0.000</div>
<div class="c" style="left:273px;width:32.89999999999998px;top:171.96px;text-align:center">P</div>
<div class="c" style="left:314.4px;top:171.96px;letter-spacing:0.178px">1/11/2006</div>
<div class="c" style="left:352.1px;top:171.96px;letter-spacing:-0.183px">10:58:44.247 AM</div>
<div class="c" style="left:415.1px;top:171.96px">GEN TRIPL2</div>
<div class="c" style="left:476.9px;width:34.40000000000005px;top:171.96px;text-align:right">1.000</div>
<div class="c" style="left:273px;width:32.89999999999998px;top:182.90px;text-align:center">P</div>
<div class="c" style="left:314.4px;top:182.90px;letter-spacing:0.178px">1/11/2006</div>
<div class="c" style="left:352.1px;top:182.90px;letter-spacing:-0.183px">10:58:44.247 AM</div>
<div class="c" style="left:415.1px;top:182.90px">GEN TRIPL1</div>
<div class="c" style="left:476.9px;width:34.40000000000005px;top:182.90px;text-align:right">1.000</div>
<div class="c" style="left:273px;width:32.89999999999998px;top:193.85px;text-align:center">P</div>
<div class="c" style="left:314.4px;top:193.85px;letter-spacing:0.178px">1/11/2006</div>
<div class="c" style="left:352.1px;top:193.85px;letter-spacing:-0.183px">10:58:44.247 AM</div>
<div class="c" style="left:415.1px;top:193.85px">GEN TRIP</div>
<div class="c" style="left:476.9px;width:34.40000000000005px;top:193.85px;text-align:right">1.000</div>
<div class="c" style="left:273px;width:32.89999999999998px;top:204.79px;text-align:center">P</div>
<div class="c" style="left:314.4px;top:204.79px;letter-spacing:0.178px">1/11/2006</div>
<div class="c" style="left:352.1px;top:204.79px;letter-spacing:-0.183px">10:58:44.247 AM</div>
<div class="c" style="left:415.1px;top:204.79px">GEN TRIPL3</div>
<div class="c" style="left:476.9px;width:34.40000000000005px;top:204.79px;text-align:right">1.000</div>
<div class="c" style="left:273px;width:32.89999999999998px;top:215.73px;text-align:center">P</div>
<div class="c" style="left:314.4px;top:215.73px;letter-spacing:0.178px">1/11/2006</div>
<div class="c" style="left:352.1px;top:215.73px;letter-spacing:-0.183px">10:58:44.247 AM</div>
<div class="c" style="left:415.1px;top:215.73px">GEN TRIPL3</div>
<div class="c" style="left:476.9px;width:34.40000000000005px;top:215.73px;text-align:right">1.000</div>
<div class="c" style="left:273px;width:32.89999999999998px;top:226.68px;text-align:center">P</div>
<div class="c" style="left:314.4px;top:226.68px;letter-spacing:0.178px">1/11/2006</div>
<div class="c" style="left:352.1px;top:226.68px;letter-spacing:-0.183px">10:58:44.247 AM</div>
<div class="c" style="left:415.1px;top:226.68px">GEN TRIPL1</div>
<div class="c" style="left:476.9px;width:34.40000000000005px;top:226.68px;text-align:right">1.000</div>
<div class="c" style="left:273px;width:32.89999999999998px;top:237.62px;text-align:center">P</div>
<div class="c" style="left:314.4px;top:237.62px;letter-spacing:0.178px">1/11/2006</div>
<div class="c" style="left:352.1px;top:237.62px;letter-spacing:-0.183px">10:58:44.247 AM</div>
<div class="c" style="left:415.1px;top:237.62px">GEN TRIP</div>
<div class="c" style="left:476.9px;width:34.40000000000005px;top:237.62px;text-align:right">1.000</div>
<div class="c" style="left:273px;width:32.89999999999998px;top:248.57px;text-align:center">P</div>
<div class="c" style="left:314.4px;top:248.57px;letter-spacing:0.178px">1/11/2006</div>
<div class="c" style="left:352.1px;top:248.57px;letter-spacing:-0.183px">10:58:44.247 AM</div>
<div class="c" style="left:415.1px;top:248.57px">GEN TRIPL2</div>
<div class="c" style="left:476.9px;width:34.40000000000005px;top:248.57px;text-align:right">1.000</div>
<div class="c" style="left:273px;width:32.89999999999998px;top:259.51px;text-align:center">P</div>
<div class="c" style="left:314.4px;top:259.51px;letter-spacing:0.178px">1/11/2006</div>
<div class="c" style="left:352.1px;top:259.51px;letter-spacing:-0.183px">10:58:43.047 AM</div>
<div class="c" style="left:415.1px;top:259.51px">PHS-L1</div>
<div class="c" style="left:476.9px;width:34.40000000000005px;top:259.51px;text-align:right">1.000</div>
<div class="c" style="left:273px;width:32.89999999999998px;top:270.45px;text-align:center">P</div>
<div class="c" style="left:314.4px;top:270.45px;letter-spacing:0.178px">1/11/2006</div>
<div class="c" style="left:352.1px;top:270.45px;letter-spacing:-0.183px">10:58:43.047 AM</div>
<div class="c" style="left:415.1px;top:270.45px">PHS-L1</div>
<div class="c" style="left:476.9px;width:34.40000000000005px;top:270.45px;text-align:right">1.000</div>
<div class="c" style="left:273px;width:32.89999999999998px;top:281.40px;text-align:center">P</div>
<div class="c" style="left:314.4px;top:281.40px;letter-spacing:0.178px">1/11/2006</div>
<div class="c" style="left:352.1px;top:281.40px;letter-spacing:-0.183px">10:53:50.707 AM</div>
<div class="c" style="left:415.1px;top:281.40px">GEN TRIPL3</div>
<div class="c" style="left:476.9px;width:34.40000000000005px;top:281.40px;text-align:right">0.000</div>
<div class="c" style="left:273px;width:32.89999999999998px;top:292.34px;text-align:center">P</div>
<div class="c" style="left:314.4px;top:292.34px;letter-spacing:0.178px">1/11/2006</div>
<div class="c" style="left:352.1px;top:292.34px;letter-spacing:-0.183px">10:53:50.707 AM</div>
<div class="c" style="left:415.1px;top:292.34px">GEN TRIP</div>
<div class="c" style="left:476.9px;width:34.40000000000005px;top:292.34px;text-align:right">0.000</div>
<div class="c" style="left:273px;width:32.89999999999998px;top:303.29px;text-align:center">P</div>
<div class="c" style="left:314.4px;top:303.29px;letter-spacing:0.178px">1/11/2006</div>
<div class="c" style="left:352.1px;top:303.29px;letter-spacing:-0.183px">10:53:50.707 AM</div>
<div class="c" style="left:415.1px;top:303.29px">GEN TRIPL1</div>
<div class="c" style="left:476.9px;width:34.40000000000005px;top:303.29px;text-align:right">0.000</div>
<div class="c" style="left:273px;width:32.89999999999998px;top:314.23px;text-align:center">P</div>
<div class="c" style="left:314.4px;top:314.23px;letter-spacing:0.178px">1/11/2006</div>
<div class="c" style="left:352.1px;top:314.23px;letter-spacing:-0.183px">10:53:50.707 AM</div>
<div class="c" style="left:415.1px;top:314.23px">GEN TRIPL2</div>
<div class="c" style="left:476.9px;width:34.40000000000005px;top:314.23px;text-align:right">0.000</div>
<div class="c" style="left:273px;width:32.89999999999998px;top:325.17px;text-align:center">P</div>
<div class="c" style="left:314.4px;top:325.17px;letter-spacing:0.178px">1/11/2006</div>
<div class="c" style="left:352.1px;top:325.17px;letter-spacing:-0.183px">10:53:50.707 AM</div>
<div class="c" style="left:415.1px;top:325.17px">GEN TRIPL3</div>
<div class="c" style="left:476.9px;width:34.40000000000005px;top:325.17px;text-align:right">0.000</div>
<div class="c" style="left:273px;width:32.89999999999998px;top:336.12px;text-align:center">P</div>
<div class="c" style="left:314.4px;top:336.12px;letter-spacing:0.178px">1/11/2006</div>
<div class="c" style="left:352.1px;top:336.12px;letter-spacing:-0.183px">10:53:50.623 AM</div>
<div class="c" style="left:415.1px;top:336.12px">ZM2 START</div>
<div class="c" style="left:476.9px;width:34.40000000000005px;top:336.12px;text-align:right">0.000</div>
<div class="c" style="left:273px;width:32.89999999999998px;top:347.06px;text-align:center">P</div>
<div class="c" style="left:314.4px;top:347.06px;letter-spacing:0.178px">1/11/2006</div>
<div class="c" style="left:352.1px;top:347.06px;letter-spacing:-0.183px">10:53:50.623 AM</div>
<div class="c" style="left:415.1px;top:347.06px">PHS-L1</div>
<div class="c" style="left:476.9px;width:34.40000000000005px;top:347.06px;text-align:right">0.000</div>
<div class="c" style="left:273px;width:32.89999999999998px;top:358.01px;text-align:center">P</div>
<div class="c" style="left:314.4px;top:358.01px;letter-spacing:0.178px">1/11/2006</div>
<div class="c" style="left:352.1px;top:358.01px;letter-spacing:-0.183px">10:53:50.623 AM</div>
<div class="c" style="left:415.1px;top:358.01px">ZM2 TRIP</div>
<div class="c" style="left:476.9px;width:34.40000000000005px;top:358.01px;text-align:right">0.000</div>
<div class="c" style="left:273px;width:32.89999999999998px;top:368.95px;text-align:center">P</div>
<div class="c" style="left:314.4px;top:368.95px;letter-spacing:0.178px">1/11/2006</div>
<div class="c" style="left:352.1px;top:368.95px;letter-spacing:-0.183px">10:53:50.553 AM</div>
<div class="c" style="left:415.1px;top:368.95px">GEN TRIPL1</div>
<div class="c" style="left:476.9px;width:34.40000000000005px;top:368.95px;text-align:right">1.000</div>
<div class="c" style="left:273px;width:32.89999999999998px;top:379.89px;text-align:center">P</div>
<div class="c" style="left:314.4px;top:379.89px;letter-spacing:0.178px">1/11/2006</div>
<div class="c" style="left:352.1px;top:379.89px;letter-spacing:-0.183px">10:53:50.553 AM</div>
<div class="c" style="left:415.1px;top:379.89px">GEN TRIPL3</div>
<div class="c" style="left:476.9px;width:34.40000000000005px;top:379.89px;text-align:right">1.000</div>
<div class="c" style="left:273px;width:32.89999999999998px;top:390.84px;text-align:center">P</div>
<div class="c" style="left:314.4px;top:390.84px;letter-spacing:0.178px">1/11/2006</div>
<div class="c" style="left:352.1px;top:390.84px;letter-spacing:-0.183px">10:53:50.553 AM</div>
<div class="c" style="left:415.1px;top:390.84px">GEN TRIPL2</div>
<div class="c" style="left:476.9px;width:34.40000000000005px;top:390.84px;text-align:right">1.000</div>
<div class="c" style="left:273px;width:32.89999999999998px;top:401.78px;text-align:center">S</div>
<div class="c" style="left:314.4px;top:401.78px;letter-spacing:0.178px">1/11/2006</div>
<div class="c" style="left:352.1px;top:401.78px;letter-spacing:-0.183px">10:47:28.657 AM</div>
<div class="c" style="left:415.1px;top:401.78px">INT-SETCHGD</div>
<div class="c" style="left:273px;width:32.89999999999998px;top:412.73px;text-align:center">S</div>
<div class="c" style="left:314.4px;top:412.73px;letter-spacing:0.178px">1/11/2006</div>
<div class="c" style="left:352.1px;top:412.73px;letter-spacing:-0.183px">10:37:17.540 AM</div>
<div class="c" style="left:415.1px;top:412.73px">INT-SETCHGD</div>
<div class="c" style="left:273px;width:32.89999999999998px;top:423.67px;text-align:center">S</div>
<div class="c" style="left:314.4px;top:423.67px;letter-spacing:0.178px">1/11/2006</div>
<div class="c" style="left:352.1px;top:423.67px;letter-spacing:-0.183px">10:23:44.757 AM</div>
<div class="c" style="left:415.1px;top:423.67px">INT-APPERROR</div>
<div class="c" style="left:519.0px;top:423.67px">Off</div>
<div class="c" style="left:273px;width:32.89999999999998px;top:434.61px;text-align:center">S</div>
<div class="c" style="left:314.4px;top:434.61px;letter-spacing:0.178px">1/11/2006</div>
<div class="c" style="left:352.1px;top:434.61px;letter-spacing:-0.183px">10:23:44.757 AM</div>
<div class="c" style="left:415.1px;top:434.61px">INT-FAIL</div>
<div class="c" style="left:519.0px;top:434.61px">Off</div>
<div class="c" style="left:273px;width:32.89999999999998px;top:445.56px;text-align:center">S</div>
<div class="c" style="left:314.4px;top:445.56px;letter-spacing:0.178px">1/11/2006</div>
<div class="c" style="left:352.1px;top:445.56px;letter-spacing:-0.183px">10:23:44.757 AM</div>
<div class="c" style="left:415.1px;top:445.56px">INT-NUMFAIL</div>
<div class="c" style="left:519.0px;top:445.56px">Off</div>
<div class="c" style="left:273px;width:32.89999999999998px;top:456.50px;text-align:center">S</div>
<div class="c" style="left:314.4px;top:456.50px;letter-spacing:0.178px">1/11/2006</div>
<div class="c" style="left:352.1px;top:456.50px;letter-spacing:-0.183px">10:22:48.050 AM</div>
<div class="c" style="left:415.1px;top:456.50px">INT-APPERROR</div>
<div class="c" style="left:519.0px;top:456.50px">On</div>
<div class="c" style="left:273px;width:32.89999999999998px;top:467.45px;text-align:center">S</div>
<div class="c" style="left:314.4px;top:467.45px;letter-spacing:0.178px">1/11/2006</div>
<div class="c" style="left:352.1px;top:467.45px;letter-spacing:-0.183px">10:22:48.050 AM</div>
<div class="c" style="left:415.1px;top:467.45px">INT-FAIL</div>
<div class="c" style="left:519.0px;top:467.45px">On</div>
<div class="c" style="left:273px;width:32.89999999999998px;top:478.39px;text-align:center">S</div>
<div class="c" style="left:314.4px;top:478.39px;letter-spacing:0.178px">1/11/2006</div>
<div class="c" style="left:352.1px;top:478.39px;letter-spacing:-0.183px">10:22:48.050 AM</div>
<div class="c" style="left:415.1px;top:478.39px">INT-NUMFAIL</div>
<div class="c" style="left:519.0px;top:478.39px">On</div>
<div class="c" style="left:273px;width:32.89999999999998px;top:489.33px;text-align:center">S</div>
<div class="c" style="left:314.4px;top:489.33px;letter-spacing:0.178px">1/11/2006</div>
<div class="c" style="left:352.1px;top:489.33px;letter-spacing:-0.183px">10:22:47.123 AM</div>
<div class="c" style="left:415.1px;top:489.33px">INT-SETCHGD</div>
<div class="c" style="left:273px;width:32.89999999999998px;top:500.28px;text-align:center">S</div>
<div class="c" style="left:316.5px;top:500.28px;letter-spacing:0.178px">1/11/2006</div>
<div class="c" style="left:354.2px;top:500.28px;letter-spacing:-0.196px">9:55:18.993 AM</div>
<div class="c" style="left:415.1px;top:500.28px">INT-NUMFAIL</div>
<div class="c" style="left:519.0px;top:500.28px">Off</div>
<div class="c" style="left:273px;width:32.89999999999998px;top:511.22px;text-align:center">S</div>
<div class="c" style="left:316.5px;top:511.22px;letter-spacing:0.178px">1/11/2006</div>
<div class="c" style="left:354.2px;top:511.22px;letter-spacing:-0.196px">9:55:18.993 AM</div>
<div class="c" style="left:415.1px;top:511.22px">INT-FAIL</div>
<div class="c" style="left:519.0px;top:511.22px">Off</div>
<div class="c" style="left:273px;width:32.89999999999998px;top:522.17px;text-align:center">S</div>
<div class="c" style="left:316.5px;top:522.17px;letter-spacing:0.178px">1/11/2006</div>
<div class="c" style="left:354.2px;top:522.17px;letter-spacing:-0.196px">9:55:18.993 AM</div>
<div class="c" style="left:415.1px;top:522.17px">INT-APPERROR</div>
<div class="c" style="left:519.0px;top:522.17px">Off</div>
</div></body></html>
